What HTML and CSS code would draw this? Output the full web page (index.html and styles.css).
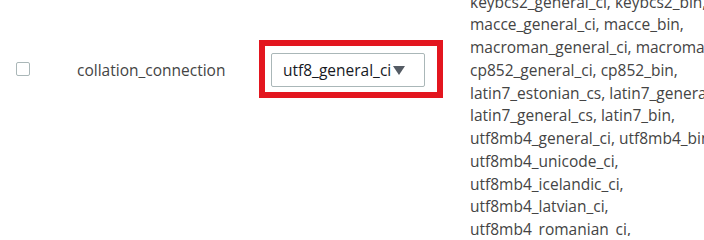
FILE: index.html
```html
<!DOCTYPE html>
<html>
<head>
<meta charset="utf-8">
<link rel="stylesheet" href="styles.css">
</head>
<body>
<div class="row">
  <div class="cell-check"><span class="checkbox"></span></div>
  <div class="cell-name">collation_connection</div>
  <div class="cell-value">
    <div class="highlight">
      <div class="select"><span class="select-text">utf8_general_ci</span><span class="caret"></span></div>
    </div>
  </div>
  <div class="cell-allowed">
    <div class="line">keybcs2_general_ci, keybcs2_bin,</div>
    <div class="line">macce_general_ci, macce_bin,</div>
    <div class="line">macroman_general_ci, macroman_bin,</div>
    <div class="line">cp852_general_ci, cp852_bin,</div>
    <div class="line">latin7_estonian_cs, latin7_general_ci,</div>
    <div class="line">latin7_general_cs, latin7_bin,</div>
    <div class="line">utf8mb4_general_ci, utf8mb4_bin,</div>
    <div class="line">utf8mb4_unicode_ci,</div>
    <div class="line">utf8mb4_icelandic_ci,</div>
    <div class="line">utf8mb4_latvian_ci,</div>
    <div class="line">utf8mb4_romanian_ci,</div>
  </div>
</div>
</body>
</html>
```
FILE: styles.css
```css
html, body {
  margin: 0;
  padding: 0;
  background: #fff;
  overflow: hidden;
}
body {
  width: 704px;
  height: 236px;
  font-family: "Open Sans", "Noto Sans", sans-serif;
  font-size: 15.5px;
  color: #444;
}
.row {
  display: flex;
  align-items: flex-start;
}
.cell-check {
  width: 16px;
  padding-left: 16px;
  padding-top: 62px;
  flex: none;
}
.checkbox {
  display: block;
  width: 12px;
  height: 12px;
  border: 1px solid #aab7b8;
  border-radius: 2px;
  background: #fff;
}
.cell-name {
  flex: none;
  width: 182px;
  padding-left: 45px;
  padding-top: 59px;
  line-height: 22px;
  white-space: nowrap;
}
.cell-value {
  flex: none;
  width: 211px;
  padding-top: 40px;
}
.highlight {
  width: 166px;
  border: 6px solid #e3161f;
  padding: 7px 0 5px 6px;
}
.select {
  width: 152px;
  height: 32px;
  border: 1px solid #aab7b8;
  border-radius: 2px;
  display: flex;
  align-items: center;
  box-sizing: content-box;
}
.select-text {
  padding-left: 11px;
  color: #16191f;
  white-space: nowrap;
}
.caret {
  margin-left: 2px;
  width: 0;
  height: 0;
  border-left: 6px solid transparent;
  border-right: 6px solid transparent;
  border-top: 9px solid #545b64;
}
.cell-allowed {
  flex: none;
  margin-top: -9.4px;
  line-height: 22.75px;
  white-space: nowrap;
}
```
